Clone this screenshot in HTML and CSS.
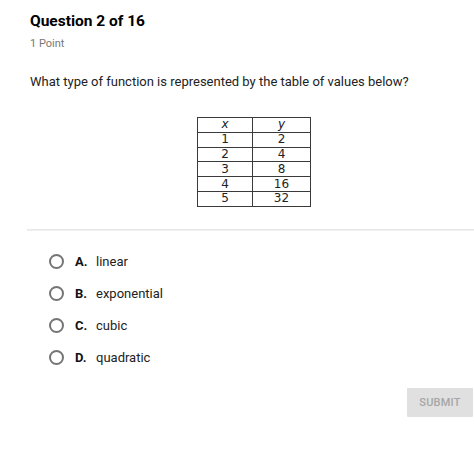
FILE: index.html
```html
<!DOCTYPE html>
<html>
<head>
<meta charset="utf-8">
<link rel="stylesheet" href="styles.css">
</head>
<body>
<div class="page">
  <div class="head">
    <h1 class="title">Question 2 of 16</h1>
    <div class="points">1 Point</div>
    <p class="prompt">What type of function is represented by the table of values below?</p>
    <div class="table-wrap">
      <table class="values">
        <tr><td class="var">x</td><td class="var">y</td></tr>
        <tr><td>1</td><td>2</td></tr>
        <tr><td>2</td><td>4</td></tr>
        <tr><td>3</td><td>8</td></tr>
        <tr><td>4</td><td>16</td></tr>
        <tr><td>5</td><td>32</td></tr>
      </table>
    </div>
  </div>
  <div class="divider"></div>
  <div class="options">
    <div class="option"><span class="radio"></span><span class="letter">A.</span><span class="text">linear</span></div>
    <div class="option"><span class="radio"></span><span class="letter">B.</span><span class="text">exponential</span></div>
    <div class="option"><span class="radio"></span><span class="letter">C.</span><span class="text">cubic</span></div>
    <div class="option"><span class="radio"></span><span class="letter">D.</span><span class="text">quadratic</span></div>
  </div>
  <div class="actions">
    <button class="submit">SUBMIT</button>
  </div>
</div>
</body>
</html>
```
FILE: styles.css
```css
* { box-sizing: border-box; }
html, body { margin: 0; padding: 0; background: #ffffff; }
body { font-family: Roboto, "Liberation Sans", sans-serif; color: #212121; }

.page { width: 474px; }

.head { padding-left: 30px; padding-top: 12px; }

.title {
  margin: 0;
  font-size: 15.5px;
  line-height: 18px;
  font-weight: 700;
  color: #000000;
}

.points {
  margin-top: 7px;
  font-size: 11px;
  line-height: 13px;
  color: #777777;
}

.prompt {
  margin: 24px 0 0 0;
  font-size: 13px;
  line-height: 16px;
  color: #222222;
}

.table-wrap {
  margin-top: 27px;
  padding-left: 167px;
}

.values {
  border-collapse: collapse;
  font-family: "DejaVu Sans", Verdana, sans-serif;
  font-size: 12px;
  color: #222222;
}

.values td {
  border: 1px solid #3a3a3a;
  height: 14.8px;
  padding: 0;
  line-height: 13px;
  text-align: center;
}

.values td:first-child { width: 55px; }
.values td:last-child { width: 58px; }
.values td.var { font-style: italic; }

.divider {
  margin: 22px 0 0 27px;
  height: 2px;
  background: linear-gradient(#e6e6e6, #f2f2f2);
}

.options {
  margin-top: 15px;
  padding-left: 49px;
}

.option {
  display: flex;
  align-items: center;
  height: 32px;
  font-size: 13px;
}

.radio {
  width: 15px;
  height: 15px;
  border: 2px solid #757575;
  border-radius: 50%;
  flex: none;
}

.letter {
  margin-left: 11px;
  width: 21px;
  font-weight: 700;
  color: #111111;
}

.text { color: #222222; }

.actions {
  display: flex;
  justify-content: flex-end;
  padding-right: 1px;
  margin-top: 14px;
}

.submit {
  width: 66px;
  height: 29px;
  border: none;
  border-radius: 1px;
  background: #e0e0e0;
  color: #a6a6a6;
  font-family: Roboto, "Liberation Sans", sans-serif;
  font-weight: 500;
  font-size: 11px;
  letter-spacing: 0.2px;
  padding: 0;
}
```
